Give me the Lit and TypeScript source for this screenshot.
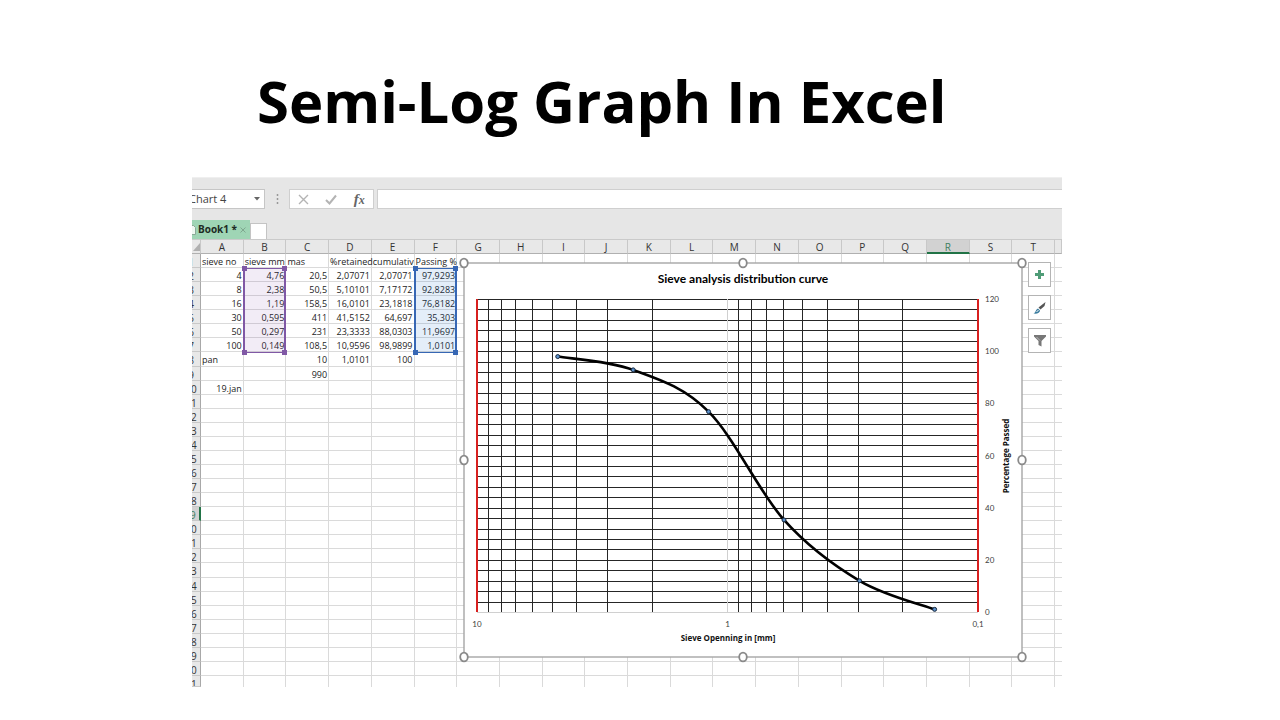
import { LitElement, html, svg, css, nothing } from "lit";
import { customElement } from "lit/decorators.js";
import { classMap } from "lit/directives/class-map.js";

const COLUMNS = "ABCDEFGHIJKLMNOPQRST".split("");
const ACTIVE_COLUMN = "R";
const ACTIVE_ROW = 19;
const ROW_COUNT = 31;

const CELLS: string[][] = [
  ["sieve no", "sieve mm", "mas", "%retained", "cumulative", "Passing %"],
  ["4", "4,76", "20,5", "2,07071", "2,07071", "97,9293"],
  ["8", "2,38", "50,5", "5,10101", "7,17172", "92,8283"],
  ["16", "1,19", "158,5", "16,0101", "23,1818", "76,8182"],
  ["30", "0,595", "411", "41,5152", "64,697", "35,303"],
  ["50", "0,297", "231", "23,3333", "88,0303", "11,9697"],
  ["100", "0,149", "108,5", "10,9596", "98,9899", "1,0101"],
  ["pan", "", "10", "1,0101", "100", ""],
  ["", "", "990"],
  ["19.jan"],
];

const toNumber = (s: string) => Number(s.replace(",", "."));
const SERIES = CELLS.slice(1, 7).map((r) => ({ size: toNumber(r[1]), passing: toNumber(r[5]) }));

@customElement("sieve-chart")
class SieveChart extends LitElement {
  static styles = css`
    :host { display: block; }
    svg { display: block; width: 100%; overflow: visible; font-family: Lato, "Open Sans", sans-serif; }
    .area { fill: #fff; stroke: #a6a6a6; stroke-width: 1.4; }
    .minor { stroke: #262626; stroke-width: 1; fill: none; }
    .major { stroke: #d0d0d0; stroke-width: 1; }
    .edge { stroke: #d8201f; stroke-width: 2; }
    .curve { fill: none; stroke: #000; stroke-width: 2.6; stroke-linecap: round; }
    .marker { fill: #5b8fc9; stroke: #14263c; stroke-width: 1; }
    .handle { fill: #fff; stroke: #8a8a8a; stroke-width: 1.8; }
    .title { font-size: 12px; font-weight: bold; fill: #000; text-anchor: middle; }
    .axis { font: bold 8px "Open Sans", sans-serif; fill: #111; text-anchor: middle; }
    .tick { font-size: 8px; fill: #404040; }
    .mid { text-anchor: middle; }
  `;

  private left = 13;
  private right = 514;
  private top = 36;
  private bottom = 349;

  private x(v: number) {
    return this.left + ((1 - Math.log10(v)) * (this.right - this.left)) / 2;
  }
  private y(p: number) {
    return this.bottom - (p * (this.bottom - this.top)) / 120;
  }

  private gridPath() {
    let d = "";
    for (let p = 4; p <= 120; p += 4) {
      const y = Math.round(this.y(p)) + 0.5;
      d += `M${this.left} ${y}H${this.right}`;
    }
    for (const decade of [1, 0.1]) {
      for (let n = 2; n < 10; n++) {
        const x = Math.floor(this.x(n * decade)) + 0.5;
        d += `M${x} ${this.top}V${this.bottom}`;
      }
    }
    return d;
  }

  private curvePath() {
    const pts = SERIES.map((s) => [this.x(s.size), this.y(s.passing)]);
    let d = `M${pts[0]}`;
    for (let i = 0; i < pts.length - 1; i++) {
      const a = pts[Math.max(i - 1, 0)];
      const b = pts[i];
      const c = pts[i + 1];
      const e = pts[Math.min(i + 2, pts.length - 1)];
      d += `C${b[0] + (c[0] - a[0]) / 6} ${b[1] + (c[1] - a[1]) / 6} ${c[0] - (e[0] - b[0]) / 6} ${c[1] - (e[1] - b[1]) / 6} ${c[0]} ${c[1]}`;
    }
    return d;
  }

  render() {
    const handles = [0, 197, 394].flatMap((y) => [0, 279, 558].map((x) => [x, y])).filter(([x, y]) => !(x === 279 && y === 197));
    return html`<svg viewBox="0 0 558 394" role="img" aria-label="Sieve analysis distribution curve">
      <rect class="area" width="558" height="394"></rect>
      <text class="title" x="279" y="20">Sieve analysis distribution curve</text>
      <path class="minor" d=${this.gridPath()}></path>
      <path class="major" d="M${this.x(1)} ${this.top}V${this.bottom}M${this.left} ${this.bottom + 0.5}H${this.right}"></path>
      <path class="edge" d="M${this.left} ${this.top}V${this.bottom}M${this.right} ${this.top}V${this.bottom}"></path>
      <path class="curve" d=${this.curvePath()}></path>
      ${SERIES.map((s) => svg`<circle class="marker" cx=${this.x(s.size)} cy=${this.y(s.passing)} r="2"></circle>`)}
      ${[0, 20, 40, 60, 80, 100, 120].map((p) => svg`<text class="tick" x="521" y=${this.y(p) + 3}>${p}</text>`)}
      <text class="tick mid" x=${this.left} y="364">10</text>
      <text class="tick mid" x=${this.x(1)} y="364">1</text>
      <text class="tick mid" x=${this.right} y="364">0,1</text>
      <text class="axis" x="264" y="378">Sieve Openning in [mm]</text>
      <text class="axis" transform="translate(545 193) rotate(-90)">Percentage Passed</text>
      ${handles.map(([x, y]) => svg`<ellipse class="handle" cx=${x} cy=${y} rx="3.8" ry="4.4"></ellipse>`)}
    </svg>`;
  }
}

@customElement("app-root")
class AppRoot extends LitElement {
  static styles = css`
    :host { display: block; background: #fff; color: #1c1c1c; font-family: "Open Sans", "Noto Sans", sans-serif; }
    * { box-sizing: border-box; }
    h1 { margin: 0; padding: 61px 0 36px 257px; font: bold 58px/80px "Open Sans", "Noto Sans", sans-serif; color: #000; white-space: nowrap; }
    .window { margin: 0 218px 0 192px; overflow: hidden; background: #e6e6e6; border-top: 1px solid #efefef; }
    .formula { display: flex; height: 20px; margin-top: 11px; }
    .namebox { position: relative; flex: 0 0 73px; }
    .namebox select { display: block; appearance: none; width: 100%; height: 20px; margin: 0; padding: 0; border: 1px solid #c6c6c6; border-left: 0; border-radius: 0; background: #fff; color: #444; font: 11px/18px "Open Sans", sans-serif; text-indent: -3px; }
    .namebox svg { position: absolute; right: 5px; top: 8px; pointer-events: none; }
    .grip { flex: 0 0 24px; display: grid; place-items: center; }
    .tools { flex: 0 0 85px; display: flex; justify-content: space-around; align-items: center; background: #fff; border: 1px solid #cfcfcf; }
    button { display: grid; place-items: center; margin: 0; padding: 0; border: 0; background: none; color: inherit; font: inherit; }
    .fx { font: italic bold 15px/18px "Liberation Serif", serif; color: #666; }
    .fx small { font-size: 12px; }
    .entry { flex: 1; min-width: 0; margin-left: 3px; padding: 0 4px; border: 1px solid #cfcfcf; border-right: 0; border-radius: 0; background: #fff; }
    .tabs { display: flex; align-items: flex-end; margin-top: 11px; height: 19px; }
    .tab { display: flex; align-items: center; height: 19px; flex: 0 0 58px; background: #9fd5b5; }
    .tab svg { flex: none; }
    .tab .name { margin-left: 2px; font: bold 10px/19px "Open Sans", sans-serif; white-space: nowrap; color: #1e2c24; }
    .tab .close { margin-left: auto; margin-right: 4px; }
    .blank { width: 17px; height: 16px; background: #fff; border: 1px solid #c4c4c4; border-bottom: 0; }
    .sheet { position: relative; background: #fff; height: 448px; }
    .tracks { display: grid; width: 100%; height: 100%; grid-template-columns: 9px repeat(20, minmax(0, 1fr)) 7px; grid-template-rows: 15px repeat(30, minmax(0, 1fr)) 11px; }
    thead, tbody, tr { display: contents; }
    th, td { padding: 0 1px; border: solid #dadada; border-width: 0 1px 1px 0; font: 9px/16px "Open Sans", sans-serif; white-space: nowrap; overflow: hidden; min-width: 0; min-height: 0; }
    td { text-align: left; }
    td:last-child { border-right: 0; }
    tr:last-child td { border-bottom: 0; }
    td.num { text-align: right; }
    td.spill { overflow: visible; }
    th { background: #e8e8e8; border-color: #c8c8c8; color: #333; }
    thead th { font-size: 10px; text-align: center; border-top: 1px solid #cacaca; line-height: 14px; border-bottom-color: #b0b0b0; }
    thead th.active { background: #d2d2d2; color: #3f7f5f; border-bottom: 2px solid #217346; }
    .row { display: flex; justify-content: flex-end; padding: 0; font-size: 10px; border-right-color: #a8a8a8; }
    .row span { flex: 0 0 18px; text-align: center; }
    .row.active { background: #d2d2d2; color: #3f7f5f; border-right: 2px solid #217346; }
    .corner svg { display: block; margin-top: 3px; }
    .overlay { position: absolute; inset: 0; pointer-events: none; }
    .range { position: relative; margin: 0 0 -1px -1px; border: 2px solid; }
    .range i { position: absolute; width: 5px; height: 5px; background: currentColor; }
    .nw { left: -3px; top: -3px; } .ne { right: -3px; top: -3px; }
    .sw { left: -3px; bottom: -3px; } .se { right: -3px; bottom: -3px; }
    .sizes { grid-area: 3 / 3 / 9 / 4; color: #8058a5; border-width: 1px 2px; background: rgba(128, 70, 170, 0.1); }
    .passing { grid-area: 3 / 7 / 9 / 8; color: #3767b4; border-width: 1px 2px; background: rgba(50, 120, 210, 0.13); }
    sieve-chart { position: absolute; left: 272px; right: 40px; top: 24px; }
    .side { position: absolute; right: 11px; top: 23px; display: grid; gap: 8px; }
    .side button { width: 23px; height: 25px; background: #fff; border: 1px solid #b4b4b4; }
  `;

  private cell(text: string, row: number, col: number) {
    const num = row > 0 && text !== "pan";
    return html`<td class=${classMap({ num, spill: row === 0 && col !== 4 })}>${text || nothing}</td>`;
  }

  render() {
    return html`
      <h1>Semi-Log Graph In Excel</h1>
      <main class="window">
        <div class="formula">
          <div class="namebox">
            <select aria-label="Name box"><option>Chart 4</option></select>
            <svg width="6" height="4"><path d="M0 0h6L3 3.5z" fill="#666" /></svg>
          </div>
          <div class="grip">
            <svg width="3" height="12"><path d="M1.5 1v2M1.5 5v2M1.5 9v2" stroke="#999" stroke-width="1.5" /></svg>
          </div>
          <div class="tools">
            <button aria-label="Cancel"><svg width="11" height="11"><path d="M1 1l9 9M10 1l-9 9" stroke="#b4b4b4" stroke-width="1.4" /></svg></button>
            <button aria-label="Enter"><svg width="12" height="11"><path d="M1 6l3.5 3.500L11 1.500" fill="none" stroke="#b4b4b4" stroke-width="2" /></svg></button>
            <button class="fx" aria-label="Insert function"><span>f<small>x</small></span></button>
          </div>
          <input class="entry" aria-label="Formula" />
        </div>
        <div class="tabs">
          <div class="tab">
            <svg width="4" height="10"><path d="M0 .5h1.500l2 2v7H0" fill="#eef8f1" stroke="#89a996" /></svg>
            <span class="name">Book1 *</span>
            <button class="close" aria-label="Close Book1"><svg width="6" height="6"><path d="M.5.5l5 5M5.500.5l-5 5" stroke="#7fa78f" /></svg></button>
          </div>
          <div class="blank"></div>
        </div>
        <div class="sheet">
          <table class="tracks">
            <thead>
              <tr>
                <th class="corner"><svg width="7" height="9"><path d="M7 0v8H0z" fill="#b0b0b0" /></svg></th>
                ${COLUMNS.map((c) => html`<th class=${classMap({ active: c === ACTIVE_COLUMN })}>${c}</th>`)}
                <th></th>
              </tr>
            </thead>
            <tbody>
              ${Array.from({ length: ROW_COUNT }, (_, r) => html`<tr>
                <th class=${classMap({ row: true, active: r + 1 === ACTIVE_ROW })}><span>${r + 1}</span></th>
                ${COLUMNS.map((_c, c) => this.cell(CELLS[r]?.[c] ?? "", r, c))}
                <td></td>
              </tr>`)}
            </tbody>
          </table>
          <div class="overlay tracks">
            <div class="range sizes"><i class="nw"></i><i class="ne"></i><i class="sw"></i><i class="se"></i></div>
            <div class="range passing"><i class="nw"></i><i class="ne"></i><i class="sw"></i><i class="se"></i></div>
          </div>
          <sieve-chart></sieve-chart>
          <div class="side">
            <button aria-label="Chart elements"><svg width="11" height="11"><path d="M5.500 1v9M1 5.500h9" stroke="#4f9c77" stroke-width="3" /></svg></button>
            <button aria-label="Chart styles"><svg width="13" height="14"><path d="M12.500 1L11.500 5L7.500 8.500L5.500 6.500Z" fill="#555" /><path d="M5 7.500l2 2c0 2.500-3 3.500-6.500 3C3 11.500 2.500 8.500 5 7.500z" fill="#3b7d9f" /><path d="M3.500 10.500l2-1" stroke="#fff" /></svg></button>
            <button aria-label="Chart filters"><svg width="12" height="13"><path d="M0 1h12v1.500L7.500 7v5.500l-3-1.500V7L0 2.500z" fill="#777" /><path d="M2.500 3L6 6.500" stroke="#bbb" /></svg></button>
          </div>
        </div>
      </main>
    `;
  }
}
